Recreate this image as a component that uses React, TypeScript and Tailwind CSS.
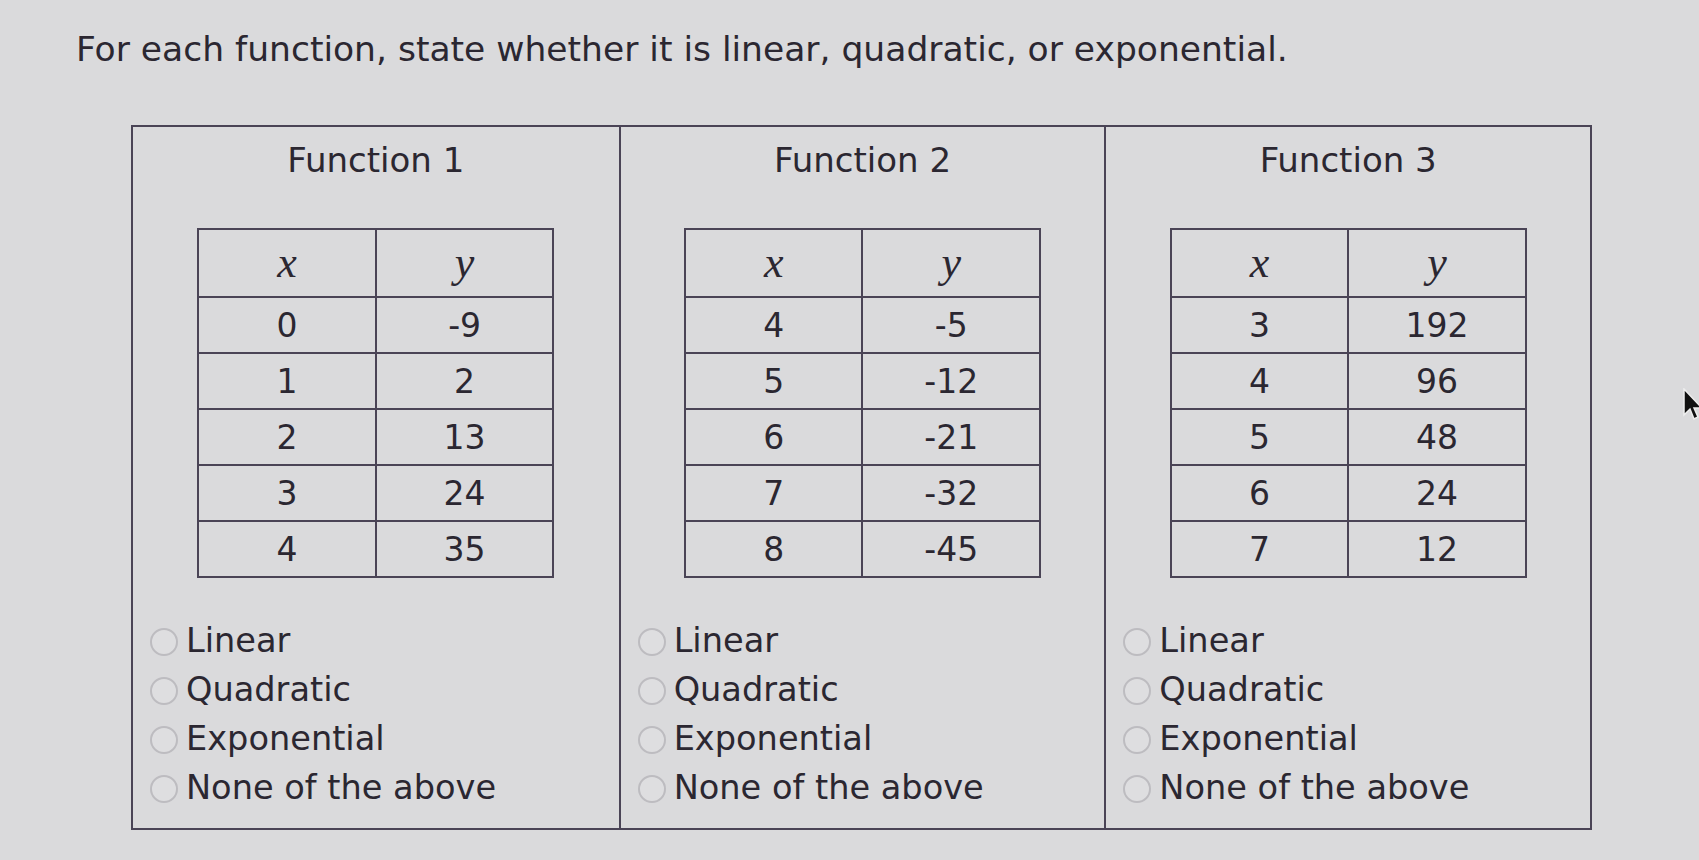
import React from 'react';

type Row = [string, string];

const functions: { title: string; rows: Row[] }[] = [
  { title: 'Function 1', rows: [['0', '-9'], ['1', '2'], ['2', '13'], ['3', '24'], ['4', '35']] },
  { title: 'Function 2', rows: [['4', '-5'], ['5', '-12'], ['6', '-21'], ['7', '-32'], ['8', '-45']] },
  { title: 'Function 3', rows: [['3', '192'], ['4', '96'], ['5', '48'], ['6', '24'], ['7', '12']] },
];

const choices = ['Linear', 'Quadratic', 'Exponential', 'None of the above'];

function FunctionColumn({ title, rows, first }: { title: string; rows: Row[]; first: boolean }) {
  return (
    <div className={`flex flex-col ${first ? '' : 'border-l-2 border-[#4a4456]'}`}>
      {/* Heading */}
      <div className="pt-[13px] text-center text-[34px] leading-[40px]">{title}</div>

      {/* Table */}
      <div className="mt-[48px] flex justify-center">
        <table className="w-[357px] border-collapse border-2 border-[#4a4456] text-center">
          <thead>
            <tr className="h-[66px]">
              <th className="w-1/2 border-2 border-[#4a4456] font-normal italic text-[44px] font-['Liberation_Serif',serif]">x</th>
              <th className="w-1/2 border-2 border-[#4a4456] font-normal italic text-[44px] font-['Liberation_Serif',serif]">y</th>
            </tr>
          </thead>
          <tbody>
            {rows.map(([x, y]) => (
              <tr key={x} className="h-[56px]">
                <td className="border-2 border-[#4a4456] text-[33px] leading-none">{x}</td>
                <td className="border-2 border-[#4a4456] text-[33px] leading-none">{y}</td>
              </tr>
            ))}
          </tbody>
        </table>
      </div>

      {/* Choices */}
      <div className="mt-[39px] pl-[17px] pb-[15px] flex flex-col">
        {choices.map((c) => (
          <label key={c} className="flex items-center h-[49px] text-[33.6px]">
            <span className="w-[28px] h-[28px] rounded-full border-2 border-[#bdbcc0] bg-[#dedee0] mr-[8px] shrink-0" />
            {c}
          </label>
        ))}
      </div>
    </div>
  );
}

export default function App() {
  return (
    <div className="relative min-h-[860px] w-[1699px] overflow-hidden bg-[#dadadc] text-[#2b2731] font-['DejaVu_Sans',sans-serif]">
      {/* Question */}
      <h1 className="pl-[76px] pt-[28px] text-[34.5px] leading-[42px] font-normal">
        For each function, state whether it is linear, quadratic, or exponential.
      </h1>

      {/* Functions box */}
      <div className="ml-[131px] mt-[55px] w-[1461px] grid grid-cols-3 border-2 border-[#4a4456]">
        {functions.map((f, i) => (
          <FunctionColumn key={f.title} title={f.title} rows={f.rows} first={i === 0} />
        ))}
      </div>

      {/* Mouse pointer */}
      <svg className="absolute left-[1683px] top-[388px]" width="24" height="34" viewBox="0 0 24 34">
        <path d="M1 1 L1 27 L7 21 L11 31 L15 29 L11 20 L19 20 Z" fill="#111" stroke="#eee" strokeWidth="1.5" />
      </svg>
    </div>
  );
}
